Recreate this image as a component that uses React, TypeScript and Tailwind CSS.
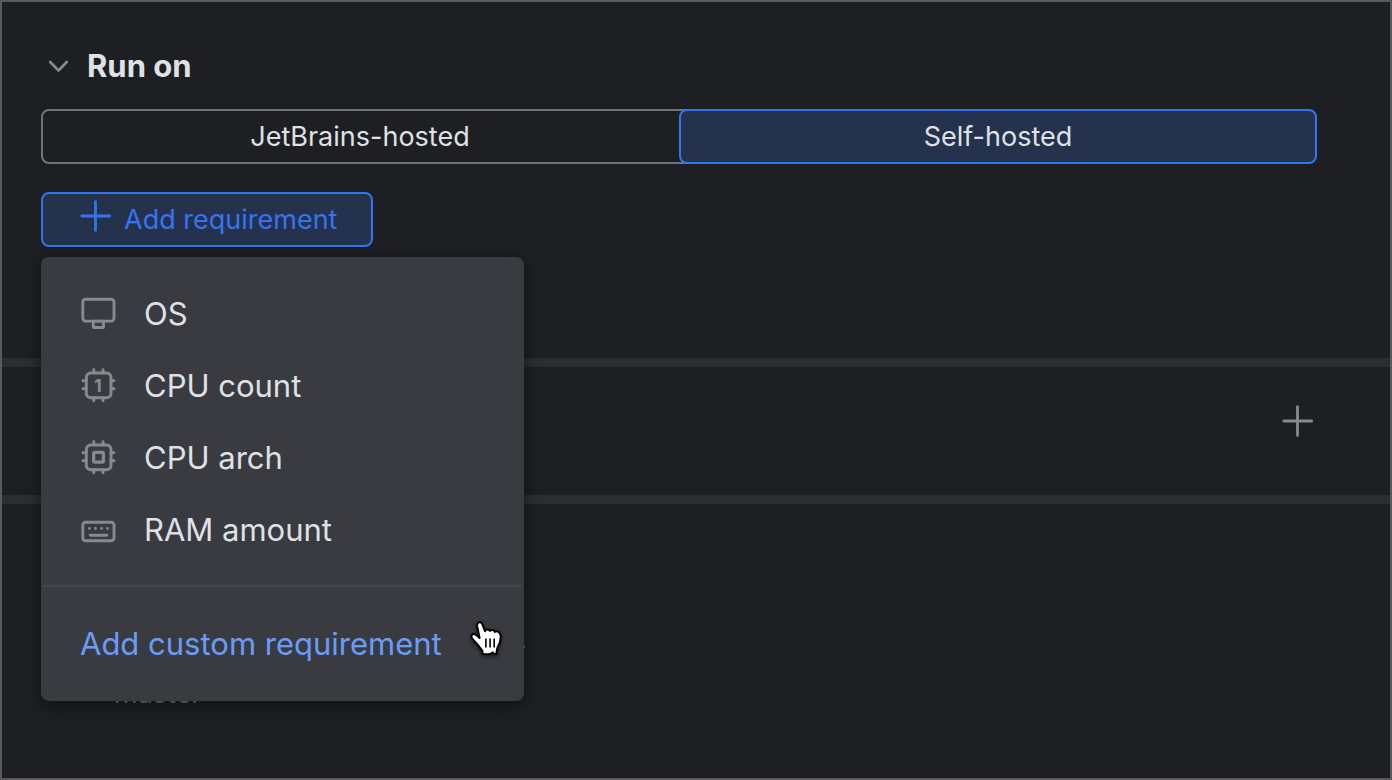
import type { ReactNode } from 'react'

const REQUIREMENTS = [
  { label: 'OS', icon: <MonitorIcon /> },
  { label: 'CPU count', icon: <CpuCountIcon /> },
  { label: 'CPU arch', icon: <CpuArchIcon /> },
  { label: 'RAM amount', icon: <RamIcon /> },
]

export default function App() {
  return (
    <main className="min-h-screen border-2 border-[#5a5a5b] bg-[#1e1f22] font-[Inter,'Liberation_Sans',sans-serif] text-[#dfe1e5]">
      <section className="h-[356px] pt-10 pr-[73px] pl-[39px]">
        <h2>
          <button type="button" aria-expanded="true" className="flex h-[46px] items-center gap-4 pl-1.5 text-[31px] leading-none font-bold">
            <svg width="24" height="24" viewBox="0 0 24 24" fill="none" stroke="#868a91" strokeWidth="2.6" strokeLinecap="round" strokeLinejoin="round" aria-hidden="true">
              <path d="M3.2 9 11.5 17.5 19.8 9" />
            </svg>
            Run on
          </button>
        </h2>

        <div className="mt-[21px] flex text-[27px] leading-none">
          <button type="button" className="-mr-2 h-[55px] flex-1 rounded-l-lg border-2 border-[#6f737a] pr-2">
            JetBrains-hosted
          </button>
          <button type="button" className="relative h-[55px] flex-1 rounded-lg border-2 border-[#3574f0] bg-[#25324d]">
            Self-hosted
          </button>
        </div>

        <div className="relative mt-7 w-fit">
          <button
            type="button" aria-haspopup="menu" aria-expanded="true"
            className="flex h-[55px] items-center gap-3 rounded-lg border-2 border-[#3574f0] bg-[#25324d] pr-[34px] pl-[37px] text-[27px] leading-none text-[#3574f0]"
          >
            <PlusIcon className="mb-2" />
            Add requirement
          </button>
          <RequirementMenu />
        </div>
      </section>

      <Divider />
      <section className="flex h-32 items-center justify-end pr-[76px]">
        <button type="button" aria-label="Add" className="text-[#868a91]">
          <PlusIcon className="mb-5" />
        </button>
      </section>
      <Divider />

      <section className="pt-[141px] pl-[112px]">
        <div className="h-[3px] w-[411px] rounded-full bg-[#6f737a]" />
        <p className="mt-7 text-[27px] leading-9 text-[#6f737a]">master</p>
      </section>
    </main>
  )
}

function RequirementMenu() {
  return (
    <div className="absolute top-full left-0 mt-2.5 w-[483px] rounded-lg bg-[#393b40] text-[31px] leading-none shadow-[0_4px_16px_rgba(0,0,0,0.5)]">
      <ul className="py-5">
        {REQUIREMENTS.map(r => (
          <li key={r.label}>
            <button type="button" className="flex h-[72px] w-full items-center gap-7 px-[39px]">
              {r.icon}
              {r.label}
            </button>
          </li>
        ))}
      </ul>
      <div className="mx-0.5 h-0.5 bg-[#43454a]" />
      <a href="#custom" className="flex h-[114px] items-center px-[39px] pb-0.5 text-[#6b9bfa]">
        Add custom requirement
      </a>
      <HandCursor />
    </div>
  )
}

function Divider() {
  return <div className="h-[9px] bg-[#2b2d30]" />
}

function PlusIcon({ className }: { className?: string }) {
  return (
    <svg className={className} width="32" height="32" viewBox="0 0 32 32" fill="none" stroke="currentColor" strokeWidth="2.8" strokeLinecap="round" aria-hidden="true">
      <path d="M15.5 1.6V30.4M1.8 16H29.8" />
    </svg>
  )
}

function MenuIcon({ children }: { children: ReactNode }) {
  return (
    <svg className="shrink-0" width="36" height="36" viewBox="0 0 36 36" fill="none" stroke="#858c90" strokeWidth="2.9" strokeLinecap="round" strokeLinejoin="round" aria-hidden="true">
      {children}
    </svg>
  )
}

function MonitorIcon() {
  return (
    <MenuIcon>
      <rect x="2.8" y="4.3" width="31.2" height="21.8" rx="2.8" />
      <rect x="13.3" y="26.1" width="10.2" height="6.4" rx="0.4" />
    </MenuIcon>
  )
}

function ChipBody() {
  return (
    <>
      <rect x="6.3" y="6" width="24.7" height="24.7" rx="4.5" />
      <path d="M13.8 2.8V6M23 2.8V6M13.8 30.7V33.8M23 30.7V33.8M3 13.8H6.3M3 21.8H6.3M31 13.8H34M31 21.8H34" />
    </>
  )
}

function CpuCountIcon() {
  return (
    <MenuIcon>
      <ChipBody />
      <text x="17.8" y="24.9" textAnchor="middle" fontSize="18" fontWeight="700" fill="#858c90" stroke="none">1</text>
    </MenuIcon>
  )
}

function CpuArchIcon() {
  return (
    <MenuIcon>
      <ChipBody />
      <rect x="13.6" y="13.4" width="9.8" height="9.8" rx="1.2" strokeWidth="3.2" />
    </MenuIcon>
  )
}

function RamIcon() {
  return (
    <MenuIcon>
      <rect x="2.8" y="11.2" width="31.2" height="18.6" rx="2.8" />
      <path d="M9.4 17.4h.01M15.4 17.4h.01M21.5 17.4h.01M27.5 17.4h.01M10.2 24.3H26.8" />
    </MenuIcon>
  )
}

function HandCursor() {
  return (
    <svg className="absolute right-5 bottom-[42px] drop-shadow-[0_2px_2px_rgba(0,0,0,0.5)]" width="34" height="40" viewBox="0 0 34 40" aria-hidden="true">
      <path
        d="M12.5 35V32C10.5 29.3 8.5 26.7 6.3 24.2C4.3 21.8 1.7 19.8 1.4 17.8C1.2 15.2 3.8 14.2 5.8 15.8C7.3 17 8.6 18 9.6 19L7.2 7.5C6.4 3 10.8 1.6 12.3 5.2L15 12.2C16 9.8 19.2 10 19.9 12C21.2 10.3 24.3 10.9 24.9 12.9C27 11.5 30.2 12.9 30.6 16.5C31 20.7 29.9 24.7 27.4 28.7L26.2 35.3C24.6 35.4 23.5 34.8 22.8 33.4C21.6 34.8 20.3 35.2 18.6 35.2Z"
        fill="#fff" stroke="#000" strokeWidth="2" strokeLinejoin="round"
      />
      <path d="M15.9 19.5V28.5M20.1 19.5V28.5M24.2 19.5V28.5" stroke="#000" strokeWidth="1.6" />
    </svg>
  )
}
